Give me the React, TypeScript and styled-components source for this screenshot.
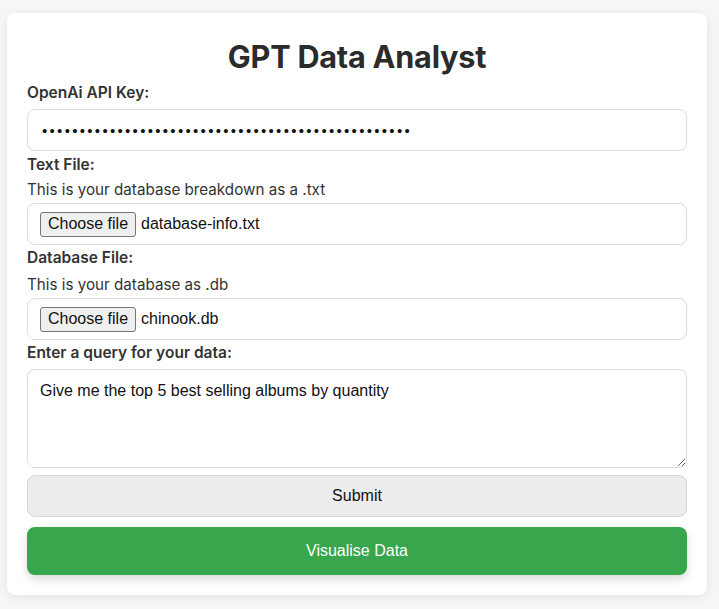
import React from 'react'
import styled, { createGlobalStyle } from 'styled-components'

const GlobalStyle = createGlobalStyle`
    html, body {
        margin: 0;
        padding: 0;
        background: #f6f6f6;
    }
    body {
        font-family: Inter, "Noto Sans", "Liberation Sans", sans-serif;
        color: #333;
    }
    * {
        box-sizing: border-box;
    }
`

const Page = styled.div`
    padding: 13px 12px 14px 7px;
`
const Card = styled.form`
    width: 700px;
    background: #fff;
    border-radius: 8px;
    box-shadow: 0 2px 10px rgba(0, 0, 0, 0.08);
    padding: 20px;
    display: flex;
    flex-direction: column;
`
const Title = styled.h1`
    margin: 6px 0 5px;
    font-size: 30.6px;
    line-height: 36px;
    font-weight: 700;
    text-align: center;
    color: #2b2b2b;
    letter-spacing: -0.2px;
`
const Label = styled.label<{ $gap?: number; $top?: number }>`
    display: block;
    font-size: 15.5px;
    font-weight: 600;
    line-height: 20px;
    margin: ${(p) => p.$top ?? 4}px 0 ${(p) => p.$gap ?? 6}px;
    color: #333;
`
const Hint = styled.p`
    margin: 0 0 3px;
    font-size: 15.2px;
    line-height: 20px;
    color: #333;
`
const Field = styled.div`
    height: 42px;
    border: 1px solid #dcdcdc;
    border-radius: 8px;
    background: #fff;
    display: flex;
    align-items: center;
    padding: 0 12px;
`
const KeyInput = styled.input`
    width: 100%;
    border: none;
    outline: none;
    padding: 0 2px;
    font-family: "Liberation Sans", Arial, sans-serif;
    font-size: 15px;
    letter-spacing: 2.3px;
    color: #111;
    background: transparent;
`
const FileButton = styled.span`
    display: inline-flex;
    align-items: center;
    height: 25px;
    padding: 0 7px;
    background: #efefef;
    border: 1px solid #767676;
    border-radius: 3px;
    font-family: "Liberation Sans", Arial, sans-serif;
    font-size: 16px;
    color: #111;
`
const FileName = styled.span`
    margin-left: 5px;
    font-family: "Liberation Sans", Arial, sans-serif;
    font-size: 16px;
    color: #111;
`
const Query = styled.textarea`
    display: block;
    width: 100%;
    height: 99px;
    border: 1px solid #dcdcdc;
    border-radius: 8px;
    padding: 11px 12px;
    font-family: "Liberation Sans", Arial, sans-serif;
    font-size: 16px;
    line-height: 20px;
    color: #111;
    resize: vertical;
    outline: none;
`
const Button = styled.button<{ $primary?: boolean }>`
    width: 100%;
    height: ${(p) => (p.$primary ? 48 : 42)}px;
    margin-top: ${(p) => (p.$primary ? 10 : 7)}px;
    border-radius: 8px;
    border: ${(p) => (p.$primary ? 'none' : '1px solid #d6d6d6')};
    background: ${(p) => (p.$primary ? '#38a64c' : '#ececec')};
    color: ${(p) => (p.$primary ? '#fff' : '#111')};
    box-shadow: ${(p) =>
        p.$primary ? '0 4px 10px rgba(0, 0, 0, 0.15)' : 'none'};
    font-family: "Liberation Sans", Arial, sans-serif;
    font-size: 16px;
    cursor: pointer;
`

const FilePicker: React.FC<{ file: string }> = ({ file }) => (
    <Field>
        <FileButton>Choose file</FileButton>
        <FileName>{file}</FileName>
    </Field>
)

export default function App() {
    return (
        <Page>
            <GlobalStyle />
            <Card onSubmit={(e) => e.preventDefault()}>
                <Title>GPT Data Analyst</Title>
                <Label $top={3}>OpenAi API Key:</Label>
                <Field>
                    <KeyInput
                        type="password"
                        defaultValue="sk-0000000000000000000000000000000000000000000000"
                    />
                </Field>
                <Label $gap={5}>Text File:</Label>
                <Hint>This is your database breakdown as a .txt</Hint>
                <FilePicker file="database-info.txt" />
                <Label $gap={7} $top={3}>Database File:</Label>
                <Hint>This is your database as .db</Hint>
                <FilePicker file="chinook.db" />
                <Label $top={3}>Enter a query for your data:</Label>
                <Query defaultValue="Give me the top 5 best selling albums by quantity" />
                <Button type="submit">Submit</Button>
                <Button type="button" $primary>
                    Visualise Data
                </Button>
            </Card>
        </Page>
    )
}
